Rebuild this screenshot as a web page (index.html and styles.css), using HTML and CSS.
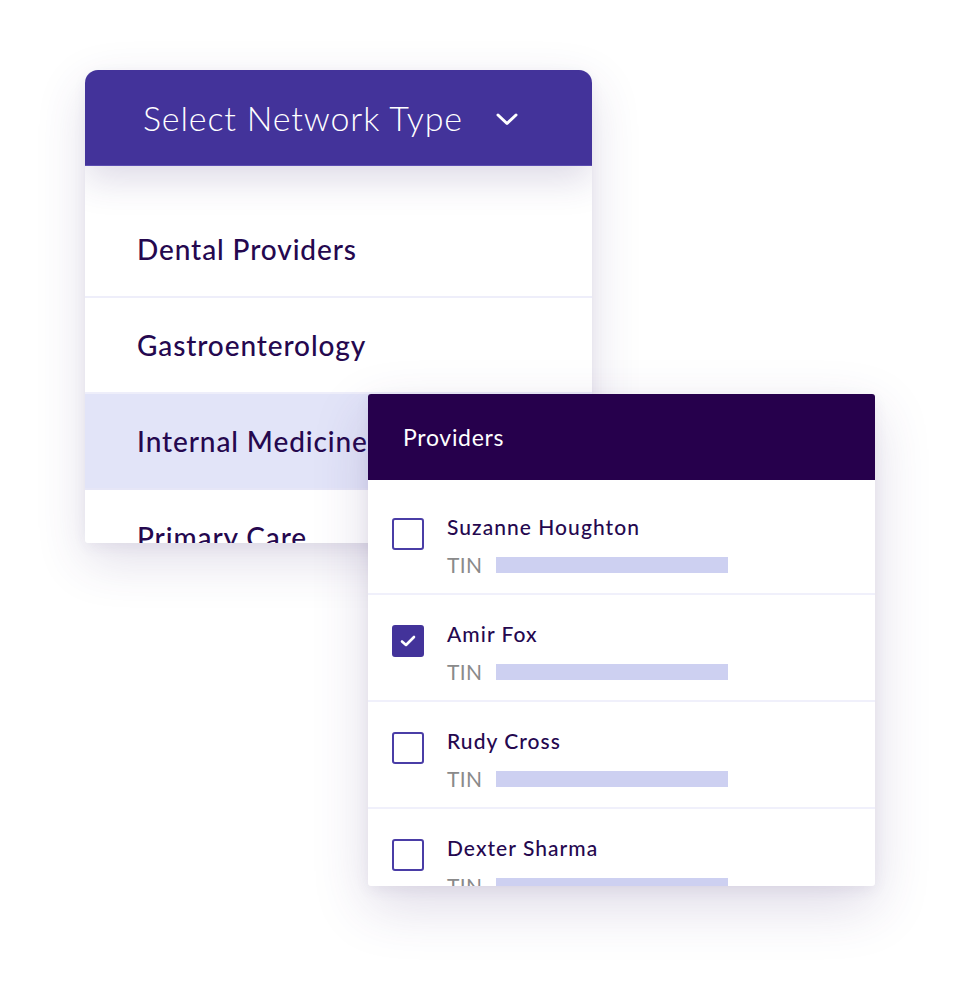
FILE: index.html
```html
<!DOCTYPE html>
<html>
<head>
<meta charset="utf-8">
<link rel="stylesheet" href="styles.css">
</head>
<body>
<div class="stage">
  <div class="network">
    <div class="network-head">
      <span class="network-title">Select Network Type</span>
      <svg class="chev" width="22" height="13" viewBox="0 0 22 13"><path d="M2 2 L11 10.5 L20 2" fill="none" stroke="#fff" stroke-width="3" stroke-linecap="round" stroke-linejoin="round"/></svg>
    </div>
    <ul class="network-list">
      <li class="net-item">Dental Providers</li>
      <li class="net-item">Gastroenterology</li>
      <li class="net-item active">Internal Medicine</li>
      <li class="net-item">Primary Care</li>
    </ul>
  </div>

  <div class="providers">
    <div class="prov-head">Providers</div>
    <ul class="prov-list">
      <li class="prov-row">
        <span class="box"></span>
        <div class="prov-info">
          <div class="prov-name">Suzanne Houghton</div>
          <div class="tin"><span class="tin-label">TIN</span><span class="tin-bar"></span></div>
        </div>
      </li>
      <li class="prov-row">
        <span class="box checked"><svg width="18" height="14" viewBox="0 0 18 14"><path d="M3 7.5 L7 11 L15 3" fill="none" stroke="#fff" stroke-width="2.6" stroke-linecap="round" stroke-linejoin="round"/></svg></span>
        <div class="prov-info">
          <div class="prov-name">Amir Fox</div>
          <div class="tin"><span class="tin-label">TIN</span><span class="tin-bar"></span></div>
        </div>
      </li>
      <li class="prov-row">
        <span class="box"></span>
        <div class="prov-info">
          <div class="prov-name">Rudy Cross</div>
          <div class="tin"><span class="tin-label">TIN</span><span class="tin-bar"></span></div>
        </div>
      </li>
      <li class="prov-row">
        <span class="box"></span>
        <div class="prov-info">
          <div class="prov-name">Dexter Sharma</div>
          <div class="tin"><span class="tin-label">TIN</span><span class="tin-bar"></span></div>
        </div>
      </li>
    </ul>
  </div>
</div>
</body>
</html>
```

FILE: styles.css
```css
* { box-sizing: border-box; }
html, body { margin: 0; padding: 0; background: #fff; }
body { font-family: Lato, "Open Sans", sans-serif; }
.stage {
  position: relative;
  width: 960px;
  height: 986px;
  padding: 70px 0 0 85px;
}
ul { list-style: none; margin: 0; padding: 0; }

.network {
  width: 507px;
  height: 473px;
  background: #fff;
  border-radius: 13px 13px 3px 3px;
  overflow: hidden;
  box-shadow: 0 18px 50px rgba(70, 50, 120, 0.16), 0 4px 14px rgba(70, 50, 120, 0.06);
  display: flex;
  flex-direction: column;
}
.network-head {
  position: relative;
  z-index: 1;
  height: 96px;
  flex: none;
  background: #43339a;
  display: flex;
  align-items: center;
  padding-left: 58px;
  gap: 33px;
  box-shadow: 0 14px 36px rgba(60, 40, 110, 0.17);
  border-bottom: 1px solid #5b4db0;
}
.network-title {
  color: #fff;
  font-size: 34px;
  font-weight: 300;
  letter-spacing: 0.85px;
}
.chev { margin-top: 4px; }
.network-list { padding-top: 36px; }
.net-item {
  height: 96px;
  display: flex;
  align-items: center;
  padding-left: 52px;
  font-size: 28px;
  font-weight: 500;
  color: #25084f;
  letter-spacing: 0.9px;
  white-space: nowrap;
  border-bottom: 2px solid #eeeefa;
}
.net-item.active { background: #e2e4f8; border-bottom-color: #e6e6f7; }

.providers {
  position: absolute;
  left: 368px;
  top: 394px;
  width: 507px;
  height: 492px;
  background: #fff;
  border-radius: 3px;
  overflow: hidden;
  box-shadow: 0 20px 55px rgba(70, 50, 120, 0.18), 0 4px 14px rgba(70, 50, 120, 0.07);
}
.prov-head {
  height: 86px;
  background: #26004c;
  color: #fff;
  font-size: 23px;
  font-weight: 400;
  display: flex;
  align-items: center;
  padding-left: 35px;
  letter-spacing: 0.7px;
}
.prov-list { padding-top: 8px; }
.prov-row {
  height: 107px;
  display: flex;
  align-items: flex-start;
  gap: 23px;
  padding: 25px 0 0 24px;
  border-bottom: 2px solid #f0f0fb;
}
.box {
  flex: none;
  width: 32px;
  height: 32px;
  margin-top: 5px;
  border: 2px solid #4a3da6;
  border-radius: 3px;
  display: flex;
  align-items: center;
  justify-content: center;
}
.box.checked { background: #43339a; border-color: #43339a; }
.prov-name {
  font-size: 21px;
  font-weight: 500;
  color: #25084f;
  line-height: 28px;
  letter-spacing: 1.05px;
}
.tin {
  display: flex;
  align-items: center;
  gap: 13px;
  margin-top: 13px;
}
.tin-label {
  font-size: 21px;
  color: #8a8a8a;
  line-height: 22px;
  letter-spacing: 0.4px;
}
.tin-bar {
  width: 232px;
  height: 16px;
  background: #cdd0f1;
}
```
